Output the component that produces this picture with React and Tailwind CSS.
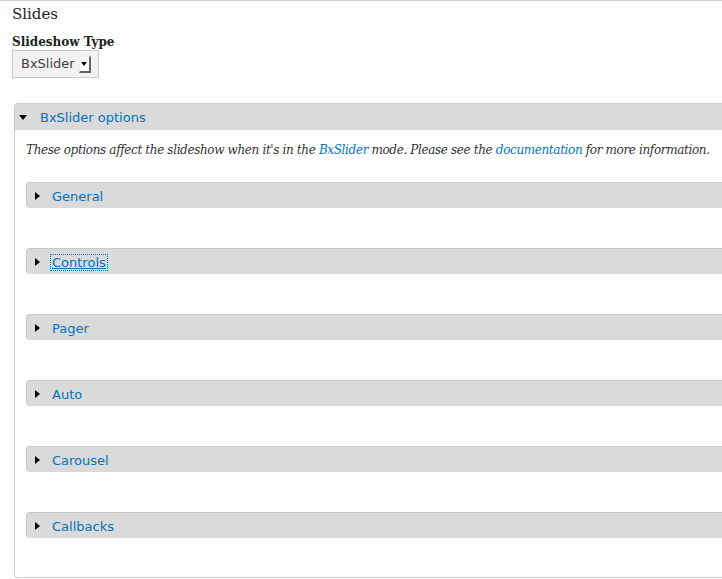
const serif = { fontFamily: '"DejaVu Serif", Georgia, serif' }
const sans = { fontFamily: '"DejaVu Sans", Verdana, sans-serif' }

function Caret({ open }) {
  return open ? (
    <svg width="8" height="5" viewBox="0 0 8 5" className="shrink-0">
      <path d="M0 0h8L4 5z" fill="#000" />
    </svg>
  ) : (
    <svg width="5" height="8" viewBox="0 0 5 8" className="shrink-0">
      <path d="M0 0v8l5-4z" fill="#000" />
    </svg>
  )
}

function SubSet({ label, focused }) {
  return (
    <div className="mb-[40px]">
      <div className="flex items-center h-[26px] bg-[#dadada] border-t border-l border-[#c8c8c8] rounded-tl-[4px] rounded-bl-[4px] pl-[8px] gap-[12px]">
        <Caret />
        <a
          href="#"
          className={
            'mt-[2px] text-[13px] text-[#0074bd] leading-none ' +
            (focused ? 'underline outline-1 outline-dotted outline-[#0074bd] outline-offset-1' : 'no-underline')
          }
          style={sans}
        >
          {label}
        </a>
      </div>
    </div>
  )
}

export default function App() {
  const subs = ['General', 'Controls', 'Pager', 'Auto', 'Carousel', 'Callbacks']
  return (
    <div className="w-[722px] h-[579px] overflow-hidden bg-white border-t border-[#cccccc] text-[#333]">
      <div className="pl-[12px] pt-[3px]">
        <div className="text-[15px] leading-[20px] text-[#222]" style={serif}>Slides</div>
        <div className="mt-[11px] text-[12px] font-bold leading-[15px] text-[#222]" style={serif}>Slideshow Type</div>
        <div
          className="w-[87px] h-[28px] bg-[#f3f2f0] border border-[#cccccc] flex items-center pl-[8px] gap-[4px]"
          style={sans}
        >
          <span className="text-[13px] text-[#444]">BxSlider</span>
          <span className="w-[12px] h-[17px] bg-white border-r-2 border-b-2 border-[#666] border-t border-l border-t-[#eee] border-l-[#eee] flex items-center justify-center">
            <svg width="6" height="4" viewBox="0 0 6 4"><path d="M0 0h6L3 4z" fill="#000" /></svg>
          </span>
        </div>
      </div>

      <div className="ml-[14px] mt-[25px] border border-r-0 border-[#cccccc] rounded-l-[4px] h-[475px]">
        <div className="flex items-center h-[26px] bg-[#dadada] rounded-tl-[3px] pl-[4px] gap-[13px]">
          <Caret open />
          <span className="mt-[1px] text-[13px] text-[#0074bd]" style={sans}>
            BxSlider options
          </span>
        </div>
        <div className="pl-[11px]">
          <p className="mt-[11px] text-[12px] italic leading-[18px] text-[#333] whitespace-nowrap tracking-[-0.36px]" style={serif}>
            These options affect the slideshow when it's in the <a href="#" className="text-[#0074bd]">BxSlider</a> mode. Please see the{' '}
            <a href="#" className="text-[#0074bd]">documentation</a> for more information.
          </p>
          <div className="mt-[23px]">
            {subs.map((s) => (
              <SubSet key={s} label={s} focused={s === 'Controls'} />
            ))}
          </div>
        </div>
      </div>
    </div>
  )
}
